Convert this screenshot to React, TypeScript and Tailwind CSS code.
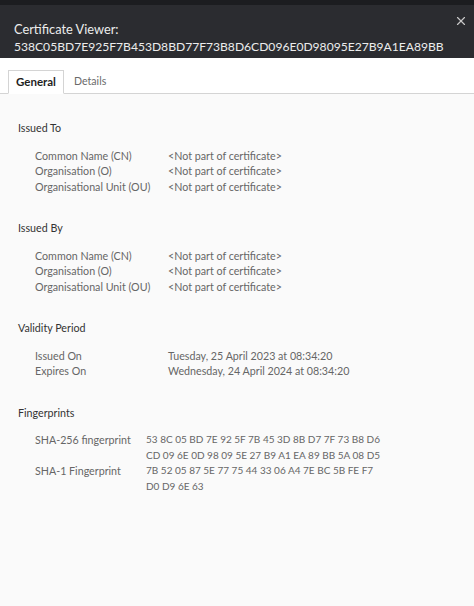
import { X } from 'lucide-react'

const sections = [
  {
    title: 'Issued To',
    labelWidth: 'w-[133px]',
    rows: [
      ['Common Name (CN)', ['<Not part of certificate>']],
      ['Organisation (O)', ['<Not part of certificate>']],
      ['Organisational Unit (OU)', ['<Not part of certificate>']],
    ],
  },
  {
    title: 'Issued By',
    labelWidth: 'w-[133px]',
    rows: [
      ['Common Name (CN)', ['<Not part of certificate>']],
      ['Organisation (O)', ['<Not part of certificate>']],
      ['Organisational Unit (OU)', ['<Not part of certificate>']],
    ],
  },
  {
    title: 'Validity Period',
    labelWidth: 'w-[133px]',
    rows: [
      ['Issued On', ['Tuesday, 25 April 2023 at 08:34:20']],
      ['Expires On', ['Wednesday, 24 April 2024 at 08:34:20']],
    ],
  },
  {
    title: 'Fingerprints',
    labelWidth: 'w-[111px]',
    rows: [
      ['SHA-256 fingerprint', ['53 8C 05 BD 7E 92 5F 7B 45 3D 8B D7 7F 73 B8 D6', 'CD 09 6E 0D 98 09 5E 27 B9 A1 EA 89 BB 5A 08 D5']],
      ['SHA-1 Fingerprint', ['7B 52 05 87 5E 77 75 44 33 06 A4 7E BC 5B FE F7', 'D0 D9 6E 63']],
    ],
  },
] as const

export default function App() {
  return (
    <div className="w-full h-[606px] flex flex-col bg-[#fafafa] font-['Lato',sans-serif] overflow-hidden">
      {/* Title bar */}
      <div className="relative h-[58px] shrink-0 border-t-[5px] border-[#1c1d20] bg-[#2b2c30] px-[14px] pt-[16px] text-[#ececec]">
        <div className="text-[12.8px] leading-[17px]">Certificate Viewer:</div>
        <div className="text-[12.1px] leading-[17px] whitespace-nowrap">538C05BD7E925F7B453D8BD77F73B8D6CD096E0D98095E27B9A1EA89BB</div>
        <button className="absolute right-[6px] top-[9px] text-[#c8c8c8]">
          <X size={14} strokeWidth={2} />
        </button>
      </div>

      {/* Tabs */}
      <div className="h-[36px] shrink-0 bg-white border-b border-[#d4d4d4] flex items-end px-[8px]">
        <div className="h-[24px] w-[56px] -mb-px border border-[#d4d4d4] border-b-white bg-white flex items-center justify-center text-[11.5px] font-bold text-[#1e1e1e]">
          General
        </div>
        <div className="h-[24px] -mb-px px-[10px] flex items-center text-[10.6px] text-[#6a6a6a]">Details</div>
      </div>

      {/* Content */}
      <div className="flex flex-col gap-[26px] px-[18px] pt-[26px] text-[10.7px] leading-[15.5px]">
        {sections.map((s) => (
          <div key={s.title}>
            <div className="text-[#333] mb-[12px]">{s.title}</div>
            <div className="flex flex-col pl-[17px] text-[#666]">
              {s.rows.map(([k, v]) => (
                <div key={k} className="flex">
                  <div className={`${s.labelWidth} shrink-0 whitespace-nowrap`}>{k}</div>
                  <div className="flex flex-col whitespace-nowrap">
                    {v.map((line) => (
                      <div key={line} className={s.title === 'Fingerprints' ? 'text-[10px]' : ''}>
                        {line}
                      </div>
                    ))}
                  </div>
                </div>
              ))}
            </div>
          </div>
        ))}
      </div>
    </div>
  )
}
